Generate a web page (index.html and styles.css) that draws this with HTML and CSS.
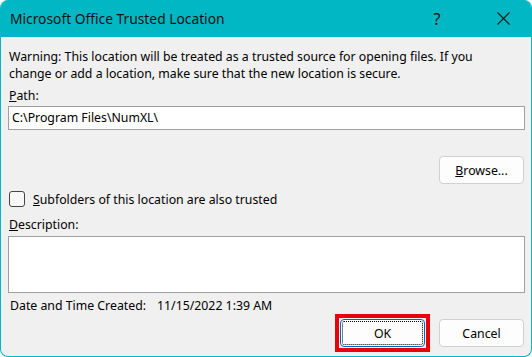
FILE: index.html
```html
<!DOCTYPE html>
<html lang="en">
<head>
  <meta charset="UTF-8" />
  <title>Microsoft Office Trusted Location</title>
  <link rel="stylesheet" href="styles.css">
</head>
<body>
  <div class="window">
    <div class="titlebar">
      <span class="title">Microsoft Office Trusted Location</span>
      <span class="help">?</span>
      <span class="close">
        <svg width="13" height="13" viewBox="0 0 13 13">
          <path d="M0.5 0.5 L12.5 12.5 M12.5 0.5 L0.5 12.5" stroke="#1a1a1a" stroke-width="1.1" fill="none" />
        </svg>
      </span>
    </div>

    <div class="content">
      <p class="warning">Warning: This location will be treated as a trusted source for opening files. If you change or add a location, make sure that the new location is secure.</p>

      <label class="field-label"><u>P</u>ath:</label>
      <div class="textbox">C:\Program Files\NumXL\</div>

      <div class="browse-row">
        <button type="button" class="btn"><u>B</u>rowse...</button>
      </div>

      <div class="check-row">
        <span class="checkbox"></span>
        <span><u>S</u>ubfolders of this location are also trusted</span>
      </div>

      <label class="field-label desc"><u>D</u>escription:</label>
      <div class="textarea"></div>

      <div class="date-row">
        <span class="date-label">Date and Time Created:</span>
        <span>11/15/2022 1:39 AM</span>
      </div>

      <div class="button-row">
        <div class="highlight">
          <button type="button" class="btn default">OK</button>
        </div>
        <button type="button" class="btn">Cancel</button>
      </div>
    </div>
  </div>
</body>
</html>
```

FILE: styles.css
```css
body {
  margin: 0;
  background: #ffffff;
  font-family: "Noto Sans", "Open Sans", sans-serif;
  font-size: 12.3px;
  color: #000;
}
.window {
  width: 532px;
  height: 357px;
  box-sizing: border-box;
  background: #f0f0f0;
  border: 1px solid #00b7c3;
  border-top: none;
  border-radius: 8px;
  overflow: hidden;
}
.titlebar {
  height: 37px;
  background: #00b7c3;
  display: flex;
  align-items: center;
  padding-left: 9px;
}
.title {
  font-size: 13.8px;
  flex: 1;
  color: #111;
}
.help {
  font-size: 16px;
  width: 58px;
  margin-right: 12px;
  text-align: center;
  color: #111;
}
.close {
  width: 50px;
  display: flex;
  justify-content: center;
  margin-right: 3px;
}
.content {
  padding: 11px 6px 0 7px;
}
.warning {
  margin: 0;
  line-height: 17px;
  padding-left: 1px;
  max-width: 480px;
}
.field-label {
  display: block;
  line-height: 17px;
  margin-top: 5px;
  padding-left: 1px;
}
.field-label.desc {
  margin-top: 8px;
}
.textbox {
  margin-top: 2px;
  height: 24px;
  box-sizing: border-box;
  background: #fff;
  border: 1px solid #a0a0a0;
  padding: 3px 3px;
  line-height: 16px;
}
.browse-row {
  display: flex;
  justify-content: flex-end;
  margin-top: 26px;
  padding-right: 1px;
}
.btn {
  width: 85px;
  height: 28px;
  font-family: inherit;
  font-size: 12.3px;
  color: #000;
  background: #fdfdfd;
  border: 1px solid #d0d0d0;
  border-radius: 4px;
  padding: 0;
}
.check-row {
  display: flex;
  align-items: center;
  gap: 8px;
  margin-top: 6px;
  height: 18px;
  padding-left: 1px;
}
.checkbox {
  width: 14px;
  height: 14px;
  border: 1px solid #444;
  border-radius: 3px;
  background: #f7f7f7;
}
.textarea {
  margin-top: 3px;
  height: 57px;
  box-sizing: border-box;
  background: #fff;
  border: 1px solid #a0a0a0;
}
.date-row {
  margin-top: 4px;
  line-height: 17px;
  padding-left: 2px;
  display: flex;
}
.date-label {
  width: 147px;
}
.button-row {
  display: flex;
  justify-content: flex-end;
  align-items: center;
  gap: 9px;
  margin-top: 0;
  padding-right: 1px;
}
.highlight {
  border: 4px solid #e8000b;
  padding: 1px;
  display: flex;
}
.btn.default {
  border-color: #0067c0;
  outline: 1px dotted #000;
  outline-offset: -3px;
}
```
